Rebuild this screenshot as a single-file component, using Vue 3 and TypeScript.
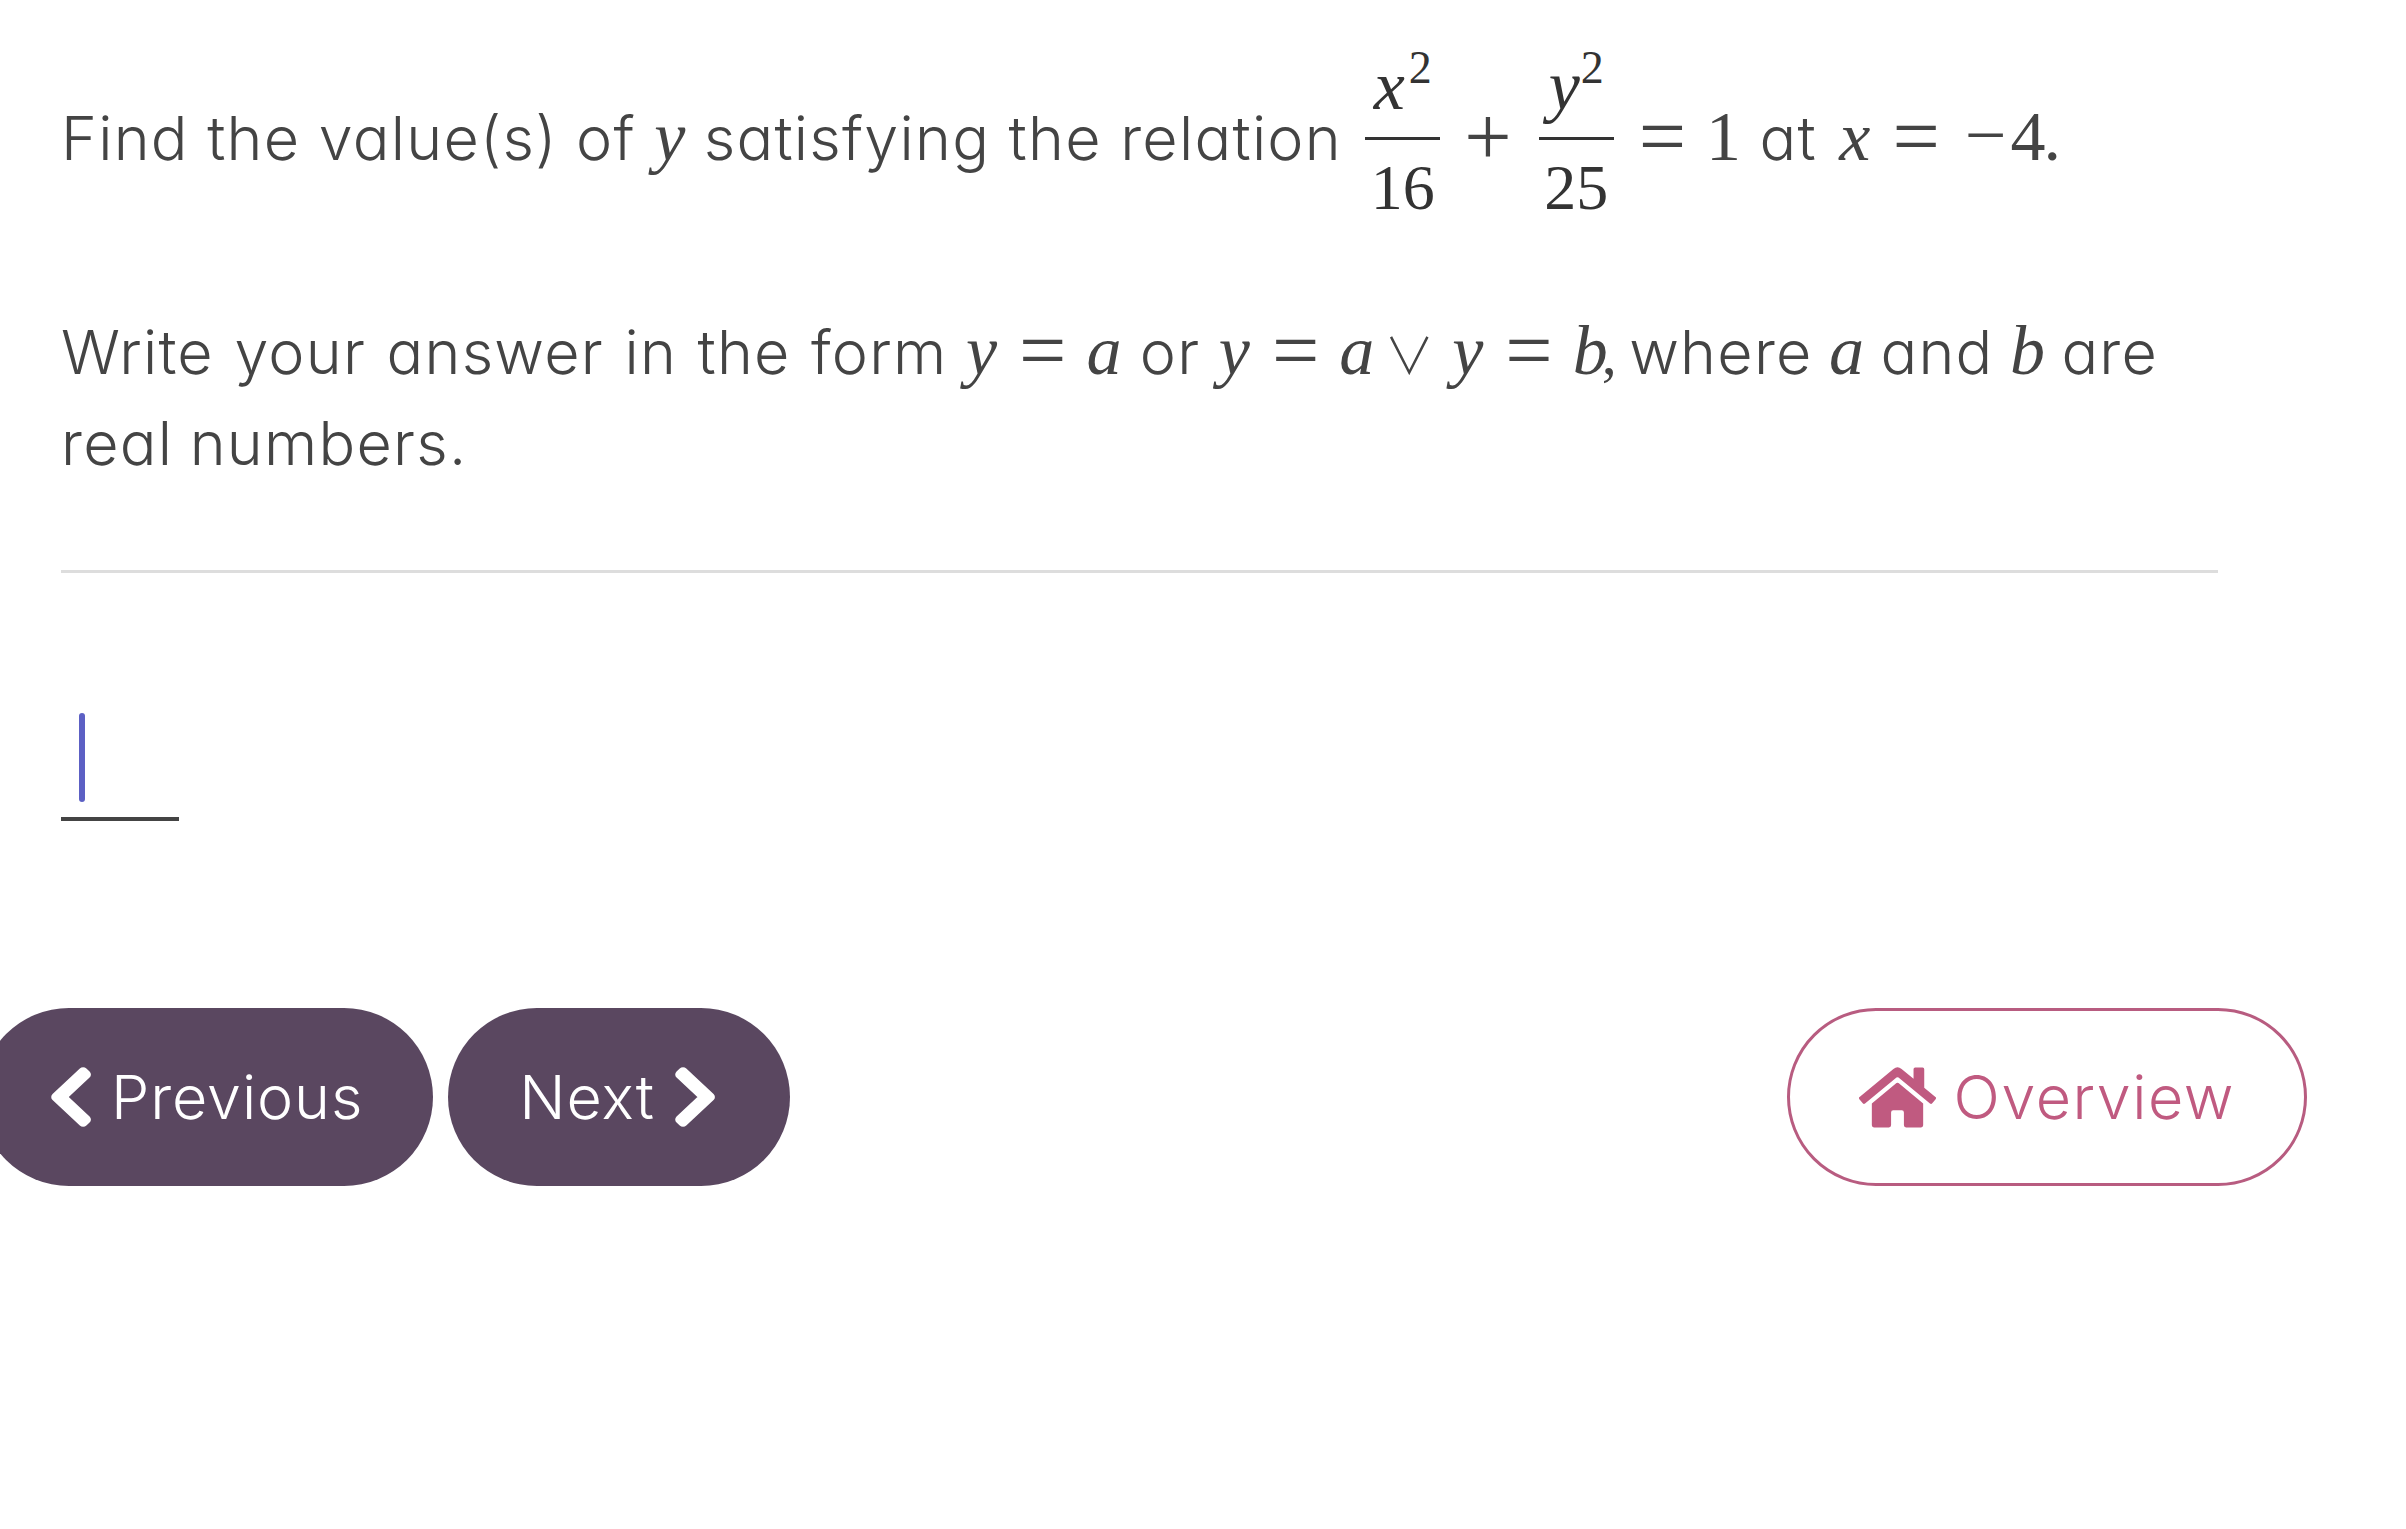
<script setup lang="ts">
const homePath = 'M280.37 148.26L96 300.11V464a16 16 0 0 0 16 16l112.06-.29a16 16 0 0 0 15.92-16V368a16 16 0 0 1 16-16h64a16 16 0 0 1 16 16v95.64a16 16 0 0 0 16 16.05L464 480a16 16 0 0 0 16-16V300L295.67 148.26a12.19 12.19 0 0 0-15.3 0zM571.6 251.47L488 182.56V44.05a12 12 0 0 0-12-12h-56a12 12 0 0 0-12 12v72.61L318.47 43a48 48 0 0 0-61 0L4.34 251.47a12 12 0 0 0-1.6 16.9l25.5 31A12 12 0 0 0 45.15 301l235.22-193.74a12.19 12.19 0 0 1 15.3 0L530.9 301a12 12 0 0 0 16.9-1.6l25.5-31a12 12 0 0 0-1.7-16.93z'
const leftPath = 'M34.52 239.03L228.87 44.69c9.37-9.37 24.57-9.37 33.94 0l22.67 22.67c9.36 9.36 9.37 24.52.04 33.9L131.49 256l154.02 154.75c9.34 9.38 9.32 24.54-.04 33.9l-22.67 22.67c-9.37 9.37-24.57 9.37-33.94 0L34.52 272.97c-9.37-9.37-9.37-24.57 0-33.94z'
const rightPath = 'M285.476 272.971L91.132 467.314c-9.373 9.373-24.569 9.373-33.941 0l-22.667-22.667c-9.357-9.357-9.375-24.522-.04-33.901L188.505 256 34.484 101.255c-9.335-9.379-9.317-24.544.04-33.901l22.667-22.667c9.373-9.373 24.569-9.373 33.941 0L285.475 239.03c9.373 9.372 9.373 24.568.001 33.941z'
</script>

<template>
  <div class="page">
    <main class="question">
      <p class="line first">Find the value(s) of <i class="mi">y</i> satisfying the relation <span class="frac"><span class="num"><i class="mi">x</i><span class="sup">2</span></span><span class="bar"></span><span class="den">16</span></span><span class="op plus">+</span><span class="frac second-frac"><span class="num"><i class="mi">y</i><span class="sup tight">2</span></span><span class="bar"></span><span class="den">25</span></span><span class="op eq">=</span><span class="mn">1</span> at <i class="mi at-x">x</i><span class="op eq">=</span><span class="op minus">−</span><span class="mn four">4</span><span class="mn dot">.</span></p>
      <p class="line second"><span class="wide">Write your answer in the form</span> <i class="mi">y</i><span class="op eq">=</span><i class="mi">a</i> or <i class="mi">y</i><span class="op eq">=</span><i class="mi">a</i><span class="op vee">∨</span><i class="mi">y</i><span class="op eq">=</span><i class="mi">b</i><span class="mn comma">,</span><span class="tail"> where <i class="mi">a</i> and <i class="mi">b</i> are real numbers.</span></p>
      <hr class="rule" />
      <div class="answer"><span class="caret"></span></div>
    </main>
    <div class="actions">
      <div class="nav">
        <button class="btn solid prev" type="button">
          <svg class="chev" viewBox="17 27 285 458" preserveAspectRatio="none"><path :d="leftPath" /></svg>
          <span>Previous</span>
        </button>
        <button class="btn solid next" type="button">
          <span>Next</span>
          <svg class="chev" viewBox="17 27 285 458" preserveAspectRatio="none"><path :d="rightPath" /></svg>
        </button>
      </div>
      <button class="btn outline" type="button">
        <svg class="home" viewBox="0 32 576 448"><path :d="homePath" /></svg>
        <span>Overview</span>
      </button>
    </div>
  </div>
</template>

<style scoped>
.page {
  width: 2406px;
  height: 1529px;
  overflow: hidden;
  background: #fff;
  color: #444;
  font-family: Inter, "Noto Sans", sans-serif;
  font-weight: 300;
  font-feature-settings: "cv11" 1;
  letter-spacing: 1.25px;
}
.question {
  width: 2157px;
  margin-left: 61px;
  padding-top: 51px;
}
.line {
  margin: 0;
  font-size: 61px;
  line-height: 91px;
}
.second {
  margin-top: 84px;
}
.wide {
  word-spacing: 2px;
}
.tail {
  word-spacing: -2px;
}
.mi,
.mn,
.op {
  font-family: "Liberation Serif", serif;
  font-size: 70px;
  font-weight: 400;
  line-height: 1;
  letter-spacing: 0;
}
.mi {
  font-style: italic;
}
.at-x {
  margin-left: 4px;
}
.op {
  display: inline-block;
  font-weight: 300;
  line-height: 0;
}
.eq {
  font-size: 84px;
  margin: 0 20px 0 22px;
  vertical-align: -5px;
}
.plus {
  font-size: 84px;
  margin: 0 27px 0 24px;
  vertical-align: -5px;
}
.minus {
  font-size: 74px;
  margin-left: 5px;
}
.four {
  margin-left: 4px;
}
.dot {
  margin-left: -2px;
}
.comma {
  font-size: 60px;
  margin: 0 -4px 0 -6px;
}
.vee {
  font-family: "Noto Sans CJK JP", sans-serif;
  font-size: 50px;
  margin: 0 18px 0 10px;
  vertical-align: 0;
}
.frac {
  display: inline-flex;
  flex-direction: column;
  align-items: center;
  vertical-align: 51px;
  margin-left: 5px;
  width: 75px;
  color: #333;
}
.second-frac {
  margin-left: 0;
  margin-right: 3px;
}
.num,
.den {
  display: block;
  font-family: "Liberation Serif", serif;
  font-size: 64px;
  font-weight: 400;
  line-height: 70px;
  letter-spacing: 0;
  white-space: nowrap;
}
.num {
  padding-bottom: 14px;
}
.den {
  padding-top: 13px;
}
.sup {
  font-size: 46px;
  line-height: 0;
  vertical-align: 26px;
  margin-left: 4px;
}
.tight {
  margin-left: 1px;
}
.bar {
  display: block;
  width: 100%;
  height: 3px;
  background: #333;
}
.rule {
  margin: 81px 0 0;
  border: 0;
  height: 3px;
  background: #ddd;
}
.answer {
  display: flex;
  width: 118px;
  height: 105px;
  margin-top: 143px;
  border-bottom: 4px solid #444;
  padding-left: 18px;
  box-sizing: border-box;
}
.caret {
  display: block;
  width: 6px;
  height: 89px;
  margin-top: -3px;
  border-radius: 3px;
  background: #5c60c4;
}
.actions {
  display: flex;
  justify-content: space-between;
  align-items: center;
  width: 2327px;
  margin-left: -20px;
  margin-top: 187px;
}
.nav {
  display: flex;
  gap: 15px;
}
.btn {
  display: inline-flex;
  align-items: center;
  gap: 20px;
  height: 178px;
  padding: 0 71px;
  border-radius: 89px;
  box-sizing: border-box;
  font: inherit;
  font-size: 61px;
  line-height: 1;
  letter-spacing: 0.9px;
}
.prev {
  padding-right: 70px;
}
.next {
  padding-right: 75px;
}
.solid {
  border: 0;
  background: #5a4760;
  color: #fff;
}
.outline {
  border: 3px solid #b85c80;
  background: #fff;
  color: #c05a80;
  padding: 0 69px;
  gap: 18px;
  letter-spacing: 1.5px;
}
.chev {
  width: 40px;
  height: 60px;
  fill: currentColor;
  stroke: currentColor;
  stroke-width: 18;
}
.home {
  width: 77px;
  height: 61px;
  fill: #c05a80;
}
</style>
